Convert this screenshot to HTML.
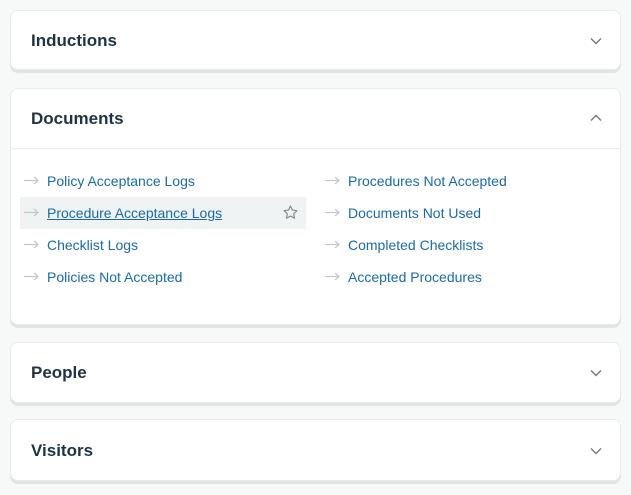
<!DOCTYPE html>
<html><head><meta charset="utf-8"><style>
*{box-sizing:border-box;margin:0;padding:0}
body{width:631px;height:495px;background:#f7f9f9;font-family:"Liberation Sans",Arial,sans-serif;position:relative;overflow:hidden}
.card{position:absolute;left:10px;width:611px;background:#fff;border:1px solid #e6eaeb;border-radius:8px;box-shadow:0 3px 0 #dfe4e6}
.h{position:absolute;left:20px;font-size:17px;font-weight:bold;color:#1e3344}
.chev{position:absolute;left:579px;width:12px;height:8px}
.div{position:absolute;left:0;right:0;top:59px;border-top:1px solid #e8ecee}
.l{position:absolute;font-size:14px;color:#1a6aa5;white-space:nowrap}
.a{position:absolute;width:15px;height:9px}
.hl{position:absolute;left:9px;top:108px;width:286px;height:32px;background:#f0f3f4}
</style></head><body>
<svg width="0" height="0" style="position:absolute"><defs><symbol id="ar" viewBox="0 0 15 9"><path d="M0 4.5H14M10 1L14 4.5L10 8" stroke="#c4c8cb" stroke-width="1.2" fill="none"/></symbol></defs></svg>
<div class="card" style="top:10px;height:60px">
<div class="h" style="top:20px">Inductions</div>
<svg class="chev" style="top:26px" viewBox="0 0 12 8"><path d="M1 1.5L6 6.5L11 1.5" stroke="#777" stroke-width="1.4" fill="none"/></svg>
</div>
<div class="card" style="top:88px;height:237px">
<div class="h" style="top:20px">Documents</div>
<svg class="chev" style="top:25px" viewBox="0 0 12 8"><path d="M1 6.5L6 1.5L11 6.5" stroke="#777" stroke-width="1.4" fill="none"/></svg>
<div class="div"></div>
<div class="hl"></div>
<svg style="position:absolute;left:271px;top:115px" width="17" height="17" viewBox="0 0 24 24"><path d="M12 2.8l2.8 5.8 6.3.8-4.6 4.4 1.2 6.3L12 17l-5.7 3.1 1.2-6.3-4.6-4.4 6.3-.8z" fill="none" stroke="#7d8891" stroke-width="1.6" stroke-linejoin="round"/></svg>
<svg class="a" style="left:13px;top:87px"><use href="#ar"/></svg><span class="l" style="left:36px;top:84px">Policy Acceptance Logs</span>
<svg class="a" style="left:13px;top:119px"><use href="#ar"/></svg><span class="l" style="left:36px;top:116px;text-decoration:underline">Procedure Acceptance Logs</span>
<svg class="a" style="left:13px;top:151px"><use href="#ar"/></svg><span class="l" style="left:36px;top:148px">Checklist Logs</span>
<svg class="a" style="left:13px;top:183px"><use href="#ar"/></svg><span class="l" style="left:36px;top:180px">Policies Not Accepted</span>
<svg class="a" style="left:314px;top:87px"><use href="#ar"/></svg><span class="l" style="left:337px;top:84px">Procedures Not Accepted</span>
<svg class="a" style="left:314px;top:119px"><use href="#ar"/></svg><span class="l" style="left:337px;top:116px">Documents Not Used</span>
<svg class="a" style="left:314px;top:151px"><use href="#ar"/></svg><span class="l" style="left:337px;top:148px">Completed Checklists</span>
<svg class="a" style="left:314px;top:183px"><use href="#ar"/></svg><span class="l" style="left:337px;top:180px">Accepted Procedures</span>
</div>
<div class="card" style="top:342px;height:61px">
<div class="h" style="top:20px">People</div>
<svg class="chev" style="top:26px" viewBox="0 0 12 8"><path d="M1 1.5L6 6.5L11 1.5" stroke="#777" stroke-width="1.4" fill="none"/></svg>
</div>
<div class="card" style="top:419px;height:62px">
<div class="h" style="top:21px">Visitors</div>
<svg class="chev" style="top:27px" viewBox="0 0 12 8"><path d="M1 1.5L6 6.5L11 1.5" stroke="#777" stroke-width="1.4" fill="none"/></svg>
</div>
</body></html>
